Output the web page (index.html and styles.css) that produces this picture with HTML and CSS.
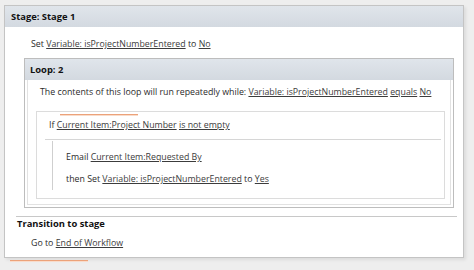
FILE: index.html
```html
<!DOCTYPE html>
<html lang="en">
  <head>
    <meta charset="UTF-8">
    <title>Workflow Stage</title>
    <link rel="stylesheet" href="styles.css">
  </head>
  <body>
    <div id="canvas">
      <div class="stage">
        <div class="block-head">Stage: Stage 1</div>

        <div class="step step-top">Set <a href="#">Variable: isProjectNumberEntered</a> to <a href="#">No</a></div>

        <div class="loop">
          <div class="block-head">Loop: 2</div>
          <div class="loop-body">
            <div class="step">The contents of this loop will run repeatedly while: <a href="#">Variable: isProjectNumberEntered</a> <a href="#">equals</a> <a href="#">No</a></div>

            <div class="condition">
              <span class="drop-mark drop-if"></span>
              <div class="cond-row">If <a href="#">Current Item:Project Number</a> <a href="#">is not empty</a></div>
              <div class="cond-rule"></div>
              <div class="branch">
                <div class="step">Email <a href="#">Current Item:Requested By</a></div>
                <div class="step">then Set <a href="#">Variable: isProjectNumberEntered</a> to <a href="#">Yes</a></div>
              </div>
            </div>
          </div>
        </div>

        <div class="transition-rule"></div>
        <div class="transition-head">Transition to stage</div>
        <div class="step step-go">Go to <a href="#">End of Workflow</a></div>
      </div>
      <span class="drop-mark drop-stage"></span>
    </div>
  </body>
</html>
```

FILE: styles.css
```css
* { box-sizing: border-box; }

body {
	margin: 0;
	background-color: #eeeeee;
	font-family: 'Open Sans', 'Liberation Sans', sans-serif;
	font-size: 8.8px;
	color: #2b2b2b;
}

a {
	color: #3c3c3c;
	text-decoration: underline;
}

#canvas {
	position: relative;
	padding: 5px 0 0 4px;
	height: 270px;
}

.stage {
	width: 460px;
	border: 1px solid #c4c4c4;
	background-color: #fff;
	padding-bottom: 3px;
	box-shadow: 2px 2px 3px rgba(0, 0, 0, 0.08);
}

.block-head {
	height: 21px;
	line-height: 21px;
	padding-left: 6px;
	font-weight: bold;
	font-size: 9.4px;
	color: #111;
	background: linear-gradient(#e0e5eb, #d3d9e0);
}

.step {
	height: 22px;
	line-height: 22px;
	white-space: nowrap;
}

.step-top {
	margin-top: 6px;
	margin-bottom: 3px;
	padding-left: 26px;
}

.loop {
	width: 430px;
	margin-left: 19px;
	border: 1px solid #bdbdbd;
}

.loop .block-head { padding-left: 5px; }

.loop-body {
	margin: 0 2px 2px 2px;
	border: 1px solid #e2e2e2;
	border-top: none;
	padding: 1px 5px 5px 8px;
}

.loop-body > .step { padding-left: 4px; }

.condition {
	position: relative;
	margin-top: 8px;
	border: 1px solid #dcdcdc;
	padding-bottom: 8px;
}

.cond-row {
	height: 27px;
	line-height: 27px;
	padding-left: 12px;
}

.cond-rule {
	height: 1px;
	margin: 0 3px 1px 8px;
	background-color: #d6d6d6;
}

.branch {
	margin-left: 15px;
	border-left: 1px solid #cfcfcf;
	padding: 5px 0 0 13px;
}

.transition-rule {
	height: 1px;
	width: 441px;
	margin: 8px 0 0 11px;
	background-color: #c8c8c8;
}

.transition-head {
	height: 13px;
	line-height: 14px;
	padding-left: 12px;
	font-weight: bold;
	font-size: 9.4px;
	color: #111;
}

.step-go {
	margin-top: 2px;
	padding-left: 26px;
}

/* orange drag/drop insertion markers */
.drop-mark {
	position: absolute;
	display: block;
	width: 78px;
	height: 2px;
	border-top: 1px solid #eca27a;
	background-color: #f8dccb;
}

.drop-if {
	top: 2px;
	left: 23px;
}

.drop-stage {
	top: 260px;
	left: 10px;
}
```
